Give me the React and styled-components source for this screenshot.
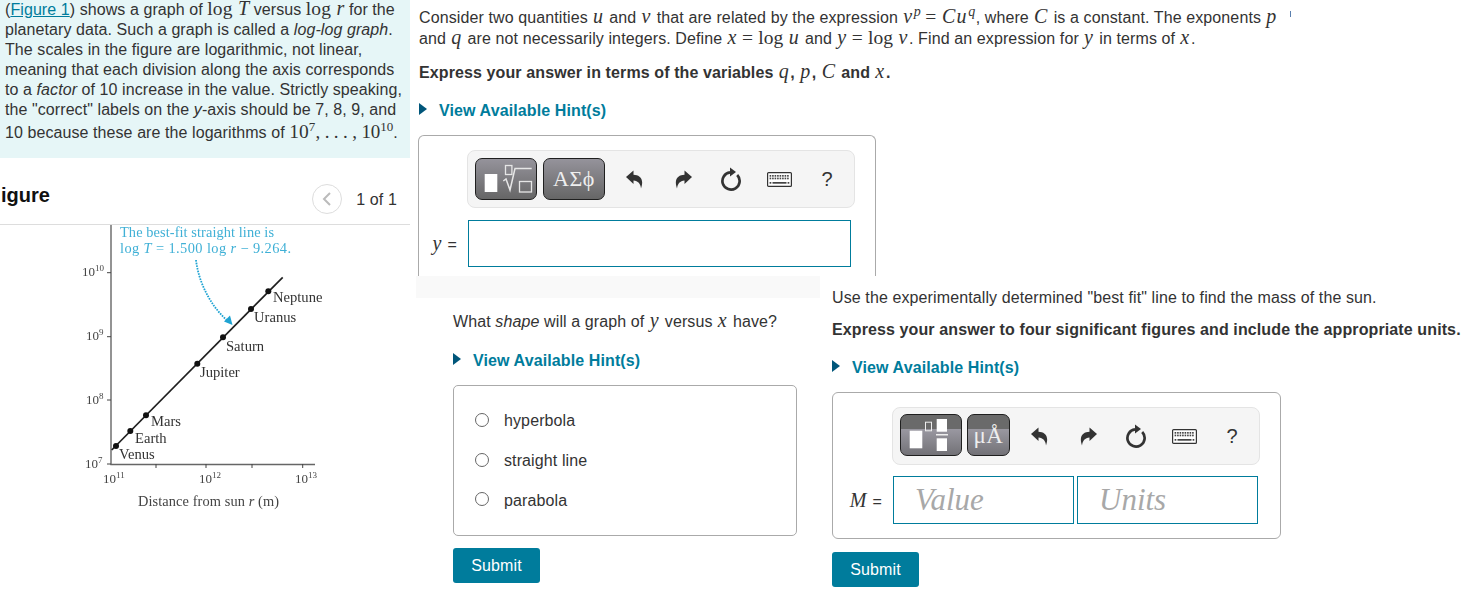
import React from "react";
import styled, { createGlobalStyle } from "styled-components";

const GlobalStyle = createGlobalStyle`
  html, body {
    margin: 0;
    padding: 0;
    background: #fff;
  }
  body {
    font-family: "Liberation Sans", Arial, sans-serif;
    font-size: 16px;
    letter-spacing: 0.11px;
    color: #333;
  }
`;

const TEAL = "#007c9c";

const ticksY = [272.7, 336.7, 400, 464];
const ticksX = [156, 206, 252, 302.7];
const planets = [
  { name: "Venus", x: 116, y: 446, lx: 119, ly: 459 },
  { name: "Earth", x: 130.3, y: 431, lx: 135, ly: 443 },
  { name: "Mars", x: 146, y: 415.3, lx: 151, ly: 425.5 },
  { name: "Jupiter", x: 197.3, y: 363.7, lx: 200, ly: 376.5 },
  { name: "Saturn", x: 223, y: 337.3, lx: 226, ly: 350.5 },
  { name: "Uranus", x: 251, y: 309, lx: 254, ly: 322 },
  { name: "Neptune", x: 268.3, y: 291.3, lx: 273, ly: 302 },
];

function PowerLabel({ x, y, exp }) {
  return (
    <text x={x} y={y} fontSize="13" fill="#444">
      10
      <tspan dy="-5" fontSize="9">
        {exp}
      </tspan>
    </text>
  );
}

function Chart() {
  return (
    <ChartSvg viewBox="60 225 270 290" width="270" height="290">
      <g fontFamily="'Liberation Serif', serif">
        <text x="120" y="237" fontSize="14.4" fill="#3fb0d6" textLength="154">
          The best-fit straight line is
        </text>
        <text x="120" y="253" fontSize="14.4" fill="#3fb0d6" textLength="171">
          log <tspan fontStyle="italic">T</tspan> = 1.500 log{" "}
          <tspan fontStyle="italic">r</tspan> − 9.264.
        </text>
        <path
          d="M196 260 C199 286 214 310 229 322"
          fill="none"
          stroke="#1fa3d2"
          strokeWidth="1.8"
          strokeDasharray="1.6 1.1"
        />
        <path d="M232.5 325 L224 321.5 L230 315.5 Z" fill="#1fa3d2" />

        <path d="M111 225 V464.5 H315" fill="none" stroke="#666" strokeWidth="1.4" />
        {ticksY.map((y) => (
          <path key={y} d={`M107 ${y} H111`} stroke="#444" strokeWidth="1" />
        ))}
        {ticksX.map((x) => (
          <path key={x} d={`M${x} 464 V468`} stroke="#444" strokeWidth="1" />
        ))}

        <path d="M111.7 450 L282.7 277.3" stroke="#1f1f1f" strokeWidth="1.7" />
        {planets.map((p) => (
          <g key={p.name}>
            <circle cx={p.x} cy={p.y} r="3" fill="#111" />
            <text x={p.lx} y={p.ly} fontSize="14.6" fill="#333">
              {p.name}
            </text>
          </g>
        ))}

        <PowerLabel x="82" y="276" exp="10" />
        <PowerLabel x="86" y="340" exp="9" />
        <PowerLabel x="86" y="404" exp="8" />
        <PowerLabel x="85" y="468" exp="7" />
        <PowerLabel x="103" y="483" exp="11" />
        <PowerLabel x="199" y="483" exp="12" />
        <PowerLabel x="295" y="483" exp="13" />

        <text x="138" y="506" fontSize="14.4" fill="#444" textLength="141">
          Distance from sun <tspan fontStyle="italic">r</tspan> (m)
        </text>
      </g>
    </ChartSvg>
  );
}

function ArrowIcon({ flip }) {
  return (
    <ArrowSvg $flip={flip} width="18" height="22" viewBox="0 0 18 22">
      <path
        d="M0 9 L7.5 2.5 V6.8 C13.5 7 18.5 10.5 15 20.5 C14.5 16 12 12.8 7.5 12.6 V16 Z"
        fill="#333"
      />
    </ArrowSvg>
  );
}

function ResetIcon() {
  return (
    <svg width="22" height="24" viewBox="0 0 22 24">
      <path
        d="M17.2 8 A8.6 8.6 0 1 1 10 5.45"
        fill="none"
        stroke="#333"
        strokeWidth="2.7"
      />
      <path d="M10 0.5 L16 5 L10 9.5 Z" fill="#333" />
    </svg>
  );
}

function KeyboardIcon() {
  const keys = [];
  for (let r = 0; r < 2; r++) {
    for (let c = 0; c < 8; c++) {
      keys.push(<rect key={`${r}-${c}`} x={2.6 + c * 2.5} y={3 + r * 2.6} width="1.6" height="1.7" />);
    }
  }
  return (
    <svg width="25" height="15" viewBox="0 0 25 15">
      <rect x="0.6" y="0.6" width="23.8" height="13.8" rx="1" fill="#fff" stroke="#333" strokeWidth="1.2" />
      <g fill="#444">
        {keys}
        <rect x="5.5" y="10" width="14" height="1.7" />
        <rect x="2.6" y="10" width="1.7" height="1.7" />
        <rect x="20.6" y="10" width="1.7" height="1.7" />
      </g>
    </svg>
  );
}

function RootTemplateIcon() {
  return (
    <svg width="62" height="42" viewBox="0 0 62 42">
      <rect x="9.7" y="16" width="12.6" height="18" fill="#fff" />
      <g fill="none" stroke="#e6e6e6" strokeWidth="1.3">
        <rect x="30.5" y="7.5" width="6.4" height="9" />
        <path d="M28.3 23 L31 21 L35 32 L40 10.5 H56.7" strokeWidth="1.5" />
        <rect x="44.5" y="23.5" width="12" height="10.5" />
      </g>
    </svg>
  );
}

function FractionTemplateIcon() {
  return (
    <svg width="62" height="42" viewBox="0 0 62 42">
      <rect x="9.7" y="16.7" width="12.6" height="17.6" fill="#fff" />
      <rect x="25.5" y="8.2" width="6" height="8.6" fill="none" stroke="#eee" strokeWidth="1" />
      <rect x="36.7" y="5" width="10.3" height="12.7" fill="#fff" />
      <rect x="36" y="20" width="12" height="1.5" fill="#eee" />
      <rect x="36.7" y="24.3" width="10.3" height="12.7" fill="#fff" />
    </svg>
  );
}

function ToolIcons() {
  return (
    <>
      <ToolCell>
        <ArrowIcon />
      </ToolCell>
      <ToolCell>
        <ArrowIcon flip />
      </ToolCell>
      <ToolCell>
        <ResetIcon />
      </ToolCell>
      <ToolCell>
        <KeyboardIcon />
      </ToolCell>
      <ToolCell>
        <HelpMark>?</HelpMark>
      </ToolCell>
    </>
  );
}

function Hint() {
  return <HintLink>View Available Hint(s)</HintLink>;
}

export default function App() {
  return (
    <Page>
      <GlobalStyle />
      <LeftColumn>
        <Intro>
          <IntroBody>
            <Line $h={17} $after={3}>
              (<IntroLink>Figure 1</IntroLink>) shows a graph of <Roman $gap={1}>log</Roman> <IntroVar>T</IntroVar>{" "}
              versus <Roman $gap={1}>log</Roman> <IntroVar>r</IntroVar> for the
            </Line>
            <Line $h={20}>
              planetary data. Such a graph is called a <em>log-log graph</em>.
            </Line>
            <Line $h={20}>The scales in the figure are logarithmic, not linear,</Line>
            <Line $h={20}>meaning that each division along the axis corresponds</Line>
            <Line $h={20}>
              to a <em>factor</em> of 10 increase in the value. Strictly speaking,
            </Line>
            <Line $h={20}>
              the "correct" labels on the <em>y</em>-axis should be 7, 8, 9, and
            </Line>
            <Line $h={24}>
              10 because these are the logarithms of <Roman>10</Roman>
              <Sup>7</Sup>
              <DotsText>, . . . , 10</DotsText>
              <Sup>10</Sup>.
            </Line>
          </IntroBody>
        </Intro>
        <FigureHeader>
          <FigureTitle>igure</FigureTitle>
          <FigureNav>
            <NavCircle>
              <svg width="10" height="16" viewBox="0 0 10 16">
                <path d="M8 2 L2 8 L8 14" fill="none" stroke="#bbb" strokeWidth="2" />
              </svg>
            </NavCircle>
            <span>1 of 1</span>
          </FigureNav>
        </FigureHeader>
        <Chart />
      </LeftColumn>

      <RightArea>
        <TopPart>
          <Line $h={21}>
            Consider two quantities <Var>u</Var> and <Var>v</Var> that are related by the expression{" "}
            <Var>v</Var>
            <SupVar>p</SupVar>
            <Equals>=</Equals>
            <Var>Cu</Var>
            <SupVar>q</SupVar>, where <Var>C</Var> is a constant. The exponents <Var>p</Var>
            <StrayMark />
          </Line>
          <Line $h={21}>
            and <Var>q</Var> are not necessarily integers. Define <Var>x</Var>
            <Equals>=</Equals>
            <Roman>log</Roman> <Var>u</Var> and <Var>y</Var>
            <Equals>=</Equals>
            <Roman>log</Roman> <Var>v</Var>. Find an expression for <Var>y</Var> in terms of <Var>x</Var>.
          </Line>
          <BoldLine $top={13}>
            Express your answer in terms of the variables <Var>q</Var>, <Var>p</Var>, <Var>C</Var> and{" "}
            <Var>x</Var>.
          </BoldLine>
          <HintRow $top={18}>
            <Hint />
          </HintRow>
          <AnswerBoxOpen>
            <Toolbar $left={48} $width={388}>
              <ToolButtons $gap={6}>
                <ToolButton $width={62}>
                  <RootTemplateIcon />
                </ToolButton>
                <ToolButton $width={62}>
                  <GlyphText $size={22}>ΑΣϕ</GlyphText>
                </ToolButton>
              </ToolButtons>
              <ToolIcons />
            </Toolbar>
            <AnswerRow $top={12}>
              <AnswerLabel $width={49}>
                <Var>y</Var> =
              </AnswerLabel>
              <MathField $width={383} $height={47} />
            </AnswerRow>
          </AnswerBoxOpen>
        </TopPart>

        <BottomPart>
          <ShapePart>
            <Strip />
            <ShapeBody>
              <QuestionLine $h={21}>
                What <em>shape</em> will a graph of <Var>y</Var> versus <Var>x</Var> have?
              </QuestionLine>
              <HintRow $top={19}>
                <Hint />
              </HintRow>
              <ChoiceBox>
                <Choice>
                  <Radio />
                  hyperbola
                </Choice>
                <Choice>
                  <Radio />
                  straight line
                </Choice>
                <Choice>
                  <Radio />
                  parabola
                </Choice>
              </ChoiceBox>
              <SubmitButton $top={12}>Submit</SubmitButton>
            </ShapeBody>
          </ShapePart>

          <MassPart>
            <Line $h={21}>Use the experimentally determined "best fit" line to find the mass of the sun.</Line>
            <BoldLine $top={11}>Express your answer to four significant figures and include the appropriate units.</BoldLine>
            <HintRow $top={17}>
              <Hint />
            </HintRow>
            <AnswerBox>
              <Toolbar $left={59} $width={368}>
                <ToolButtons $gap={5} $lift={1}>
                  <ToolButton $width={62} $pressed>
                    <FractionTemplateIcon />
                  </ToolButton>
                  <ToolButton $width={43} $pressed>
                    <GlyphText $size={23}>μÅ</GlyphText>
                  </ToolButton>
                </ToolButtons>
                <ToolIcons />
              </Toolbar>
              <AnswerRow $top={11}>
                <AnswerLabel $width={60}>
                  <Var>M</Var> =
                </AnswerLabel>
                <MathField $width={181} $height={48}>
                  <Placeholder>Value</Placeholder>
                </MathField>
                <MathField $width={181} $height={48} $gapLeft={3}>
                  <Placeholder>Units</Placeholder>
                </MathField>
              </AnswerRow>
            </AnswerBox>
            <SubmitButton $top={13}>Submit</SubmitButton>
          </MassPart>
        </BottomPart>
      </RightArea>
    </Page>
  );
}

const Page = styled.div`
  display: flex;
  width: 1478px;
  height: 606px;
  overflow: hidden;
`;

const LeftColumn = styled.div`
  width: 410px;
  flex: none;
`;

const Intro = styled.div`
  height: 158px;
  background: #e6f6f7;
  overflow: hidden;
  letter-spacing: 0.08px;
`;

const IntroBody = styled.div`
  padding-left: 5px;
`;

const Line = styled.div`
  height: ${(p) => p.$h}px;
  line-height: ${(p) => p.$h}px;
  margin-bottom: ${(p) => p.$after || 0}px;
  white-space: nowrap;
`;

const BoldLine = styled(Line).attrs({ $h: 21 })`
  margin-top: ${(p) => p.$top}px;
  font-weight: bold;
`;

const QuestionLine = styled(Line)`
  margin-top: 12px;
`;

const IntroLink = styled.span`
  color: ${TEAL};
  text-decoration: underline;
`;

const Var = styled.span`
  font-family: "Liberation Serif", serif;
  font-style: italic;
  font-weight: normal;
  font-size: 20px;
  letter-spacing: 1px;
  padding: 0 0.7px;
`;

const IntroVar = styled(Var)`
  letter-spacing: 0;
  padding: 0;
`;

const Roman = styled.span`
  font-family: "Liberation Serif", serif;
  font-weight: normal;
  font-size: 19.5px;
  margin-right: ${(p) => p.$gap || 0}px;
`;

const DotsText = styled(Roman)`
  letter-spacing: -0.15px;
  font-size: 19px;
`;

const Equals = styled(Roman)`
  margin: 0 5px 0 4px;
`;

const Sup = styled.span`
  font-family: "Liberation Serif", serif;
  font-size: 13px;
  vertical-align: 7px;
  line-height: 0;
`;

const SupVar = styled(Sup)`
  font-style: italic;
  font-size: 14px;
  letter-spacing: 0.5px;
`;

const StrayMark = styled.i`
  display: inline-block;
  width: 1px;
  height: 6px;
  margin-left: 12px;
  vertical-align: 6px;
  background: #5a7fae;
`;

const FigureHeader = styled.div`
  height: 67px;
  box-sizing: border-box;
  padding: 17px 13px 0 1px;
  border-bottom: 1px solid #ddd;
  display: flex;
  align-items: center;
  justify-content: space-between;
`;

const FigureTitle = styled.div`
  font-size: 20px;
  font-weight: bold;
  letter-spacing: 0;
  color: #111;
  margin-top: -8px;
`;

const FigureNav = styled.div`
  display: flex;
  align-items: center;
  gap: 14px;
  line-height: 20px;
`;

const NavCircle = styled.div`
  width: 30px;
  height: 30px;
  box-sizing: border-box;
  border: 1px solid #ddd;
  border-radius: 50%;
  display: flex;
  align-items: center;
  justify-content: center;
  margin-top: -2px;
`;

const ChartSvg = styled.svg`
  display: block;
  margin-left: 60px;
  letter-spacing: 0;
  filter: blur(0.6px);
`;

const ArrowSvg = styled.svg`
  transform: ${(p) => (p.$flip ? "scaleX(-1)" : "none")};
`;

const RightArea = styled.div`
  margin-left: 6px;
  flex: 1;
  min-width: 0;
`;

const TopPart = styled.div`
  height: 276px;
  box-sizing: border-box;
  padding: 6px 0 0 3px;
  overflow: hidden;
`;

const HintRow = styled.div`
  margin-top: ${(p) => p.$top}px;
  height: 21px;
`;

const HintLink = styled.a`
  display: inline-flex;
  align-items: center;
  gap: 12px;
  line-height: 21px;
  font-weight: bold;
  color: ${TEAL};

  &::before {
    content: "";
    border-left: 8px solid #00567a;
    border-top: 6px solid transparent;
    border-bottom: 6px solid transparent;
    margin-top: -3px;
  }
`;

const AnswerBox = styled.div`
  margin-top: 14px;
  width: 449px;
  height: 147px;
  box-sizing: border-box;
  padding-top: 14px;
  border: 1px solid #aaa;
  border-radius: 6px;
`;

const AnswerBoxOpen = styled(AnswerBox)`
  margin-left: -1px;
  width: 458px;
  height: 142px;
  border-bottom: none;
  border-radius: 6px 6px 0 0;
`;

const Toolbar = styled.div`
  margin-left: ${(p) => p.$left}px;
  width: ${(p) => p.$width}px;
  height: 58px;
  box-sizing: border-box;
  padding-left: 7px;
  background: #f5f5f5;
  border: 1px solid #e4e4e4;
  border-radius: 8px;
  display: flex;
  align-items: center;
`;

const ToolButtons = styled.div`
  display: flex;
  gap: ${(p) => p.$gap}px;
  margin-right: 6px;
  margin-bottom: ${(p) => (p.$lift || 0) * 2}px;
`;

const ToolButton = styled.div`
  width: ${(p) => p.$width}px;
  height: 42px;
  box-sizing: border-box;
  border: 1px solid #1f1f1f;
  border-radius: 7px;
  display: flex;
  align-items: center;
  justify-content: center;
  overflow: hidden;
  background: ${(p) =>
    p.$pressed
      ? "linear-gradient(#6a6a6a 0, #6a6a6a 14px, #9a98a1 14px, #737277 100%)"
      : "linear-gradient(#95939b, #666666)"};

  svg {
    flex: none;
  }
`;

const GlyphText = styled.span`
  font-family: "Liberation Serif", serif;
  font-size: ${(p) => p.$size}px;
  line-height: 1;
  color: #eee;
  letter-spacing: 0.5px;
`;

const ToolCell = styled.div`
  width: 48px;
  flex: none;
  display: flex;
  justify-content: center;
  align-items: center;
  color: #333;
`;

const HelpMark = styled.span`
  font-size: 20px;
  line-height: 1;
  color: #333;
`;

const AnswerRow = styled.div`
  display: flex;
  align-items: center;
  margin-top: ${(p) => p.$top}px;
`;

const AnswerLabel = styled.div`
  width: ${(p) => p.$width}px;
  box-sizing: border-box;
  padding-right: 11px;
  flex: none;
  white-space: nowrap;
  text-align: right;
`;

const MathField = styled.div`
  width: ${(p) => p.$width}px;
  height: ${(p) => p.$height}px;
  margin-left: ${(p) => p.$gapLeft || 0}px;
  box-sizing: border-box;
  padding-left: 21px;
  border: 1px solid ${TEAL};
  display: flex;
  align-items: center;
`;

const Placeholder = styled.span`
  font-family: "Liberation Serif", serif;
  font-style: italic;
  font-size: 31px;
  letter-spacing: 0;
  color: #a8a8a8;
`;

const BottomPart = styled.div`
  display: flex;
`;

const ShapePart = styled.div`
  width: 404px;
  flex: none;
`;

const Strip = styled.div`
  height: 22px;
  background: #f9f9f9;
`;

const ShapeBody = styled.div`
  padding-left: 37px;
`;

const ChoiceBox = styled.div`
  margin-top: 14px;
  width: 344px;
  height: 151px;
  box-sizing: border-box;
  padding: 15px 0 0 21px;
  border: 1px solid #aaa;
  border-radius: 5px;
`;

const Choice = styled.div`
  height: 39.7px;
  display: flex;
  align-items: center;
  gap: 15px;
  padding-top: 1px;
  box-sizing: border-box;
`;

const Radio = styled.span`
  width: 14px;
  height: 14px;
  box-sizing: border-box;
  border: 1px solid #666;
  border-radius: 50%;
  background: #fff;
  margin-top: -3px;
`;

const SubmitButton = styled.div`
  margin-top: ${(p) => p.$top}px;
  width: 87px;
  height: 35px;
  background: ${TEAL};
  border-radius: 3px;
  color: #fff;
  display: flex;
  align-items: center;
  justify-content: center;
  font-size: 16px;
`;

const MassPart = styled.div`
  margin-left: 12px;
  padding-top: 11px;
`;
